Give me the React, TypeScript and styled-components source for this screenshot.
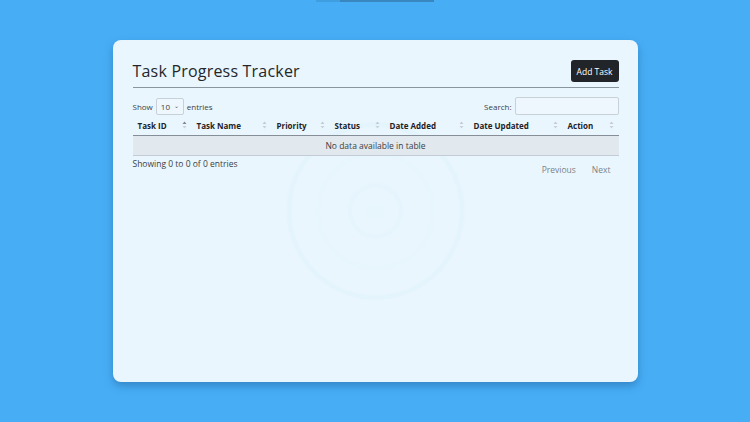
import styled, { createGlobalStyle } from "styled-components";

const GlobalStyle = createGlobalStyle`
  html, body {
    margin: 0;
    padding: 0;
    background: #47aef6;
    font-family: "Open Sans", "Liberation Sans", sans-serif;
  }
  * { box-sizing: border-box; }
`;

const Page = styled.div`
  width: 750px;
  height: 422px;
  display: flex;
  flex-direction: column;
  align-items: center;
  overflow: hidden;
`;

const TopStrip = styled.div`
  width: 118px;
  height: 2px;
  background: linear-gradient(90deg, #3f9edf 0 20%, #3a87c0 20% 100%);
  margin-bottom: 38px;
`;

const Card = styled.div`
  width: 525px;
  height: 342px;
  border-radius: 8px;
  padding: 20px 19px 0 20px;
  background:
    radial-gradient(circle at 50% 50%, rgba(215, 242, 252, 0.12) 0 8px, transparent 10px 22px, rgba(205, 238, 252, 0.14) 24px 27px, transparent 29px 54px, rgba(215, 240, 252, 0.14) 56px 59px, transparent 61px 83px, rgba(205, 236, 250, 0.2) 85px 88px, transparent 90px),
    #eaf6fd;
  box-shadow: 0 4px 8px rgba(20, 60, 110, 0.35);
  color: #212529;
`;

const Header = styled.div`
  display: flex;
  align-items: center;
  justify-content: space-between;
  padding-bottom: 5px;
  border-bottom: 1px solid #8a969f;
`;

const Title = styled.h1`
  margin: 0;
  font-size: 16px;
  line-height: 22px;
  font-weight: 500;
  color: #23272b;
  letter-spacing: 0.2px;
`;

const AddButton = styled.button`
  background: #212529;
  color: #fff;
  border: none;
  border-radius: 3px;
  height: 22px;
  padding: 0 6px;
  font-family: inherit;
  font-size: 8.5px;
`;

const Controls = styled.div`
  display: flex;
  justify-content: space-between;
  align-items: center;
  height: 18px;
  margin-top: 9px;
  font-size: 8px;
  color: #3a3f44;
`;

const Label = styled.label`
  display: flex;
  align-items: center;
  gap: 3px;
`;

const Select = styled.div`
  width: 28px;
  height: 17px;
  border: 1px solid #c9d1d8;
  border-radius: 2px;
  display: flex;
  align-items: center;
  justify-content: space-between;
  padding: 0 4px;
  font-size: 8px;
  background: #eef7fd;
`;

const SearchInput = styled.div`
  width: 104px;
  height: 18px;
  border: 1px solid #c9d1d8;
  border-radius: 2px;
  background: #eef7fd;
`;

const Table = styled.div`
  font-size: 8.5px;
`;

const HeadRow = styled.div`
  display: grid;
  grid-template-columns: 59px 80px 58px 55px 84px 94px 56px;
  border-bottom: 1px solid #868f97;
  height: 21px;
  align-items: center;
`;

const HeadCell = styled.div`
  display: flex;
  justify-content: space-between;
  align-items: center;
  padding: 0 5px;
  font-weight: 700;
  font-size: 8px;
  color: #1f2327;
`;

const SortIcon = ({ asc }: { asc?: boolean }) => (
  <svg width="5" height="8" viewBox="0 0 5 8">
    <path d="M2.5 0.5 L4.5 3 H0.5 Z" fill={asc ? "#7d858c" : "#c3cbd2"} />
    <path d="M2.5 7.5 L4.5 5 H0.5 Z" fill="#c9d1d8" />
  </svg>
);

const EmptyRow = styled.div`
  height: 20px;
  background: #e1e8ee;
  border-bottom: 1px solid #c3ccd4;
  display: flex;
  align-items: center;
  justify-content: center;
  color: #3a3f44;
`;

const Footer = styled.div`
  display: flex;
  justify-content: space-between;
  align-items: flex-start;
  margin-top: 2px;
  font-size: 8.5px;
  line-height: 12px;
  color: #3a3f44;
`;

const Pager = styled.div`
  display: flex;
  gap: 16px;
  padding: 6px 8px 0 0;
  color: #7b8389;
`;

const Chevron = styled.span`
  font-size: 6px;
  color: #555;
`;

const columns = ["Task ID", "Task Name", "Priority", "Status", "Date Added", "Date Updated", "Action"];

export default function App() {
  return (
    <Page>
      <GlobalStyle />
      <TopStrip />
      <Card>
        <Header>
          <Title>Task Progress Tracker</Title>
          <AddButton>Add Task</AddButton>
        </Header>
        <Controls>
          <Label>
            Show
            <Select>
              <span>10</span>
              <Chevron>⌄</Chevron>
            </Select>
            entries
          </Label>
          <Label>
            Search:
            <SearchInput />
          </Label>
        </Controls>
        <Table>
          <HeadRow>
            {columns.map((c, i) => (
              <HeadCell key={c}>
                {c}
                <SortIcon asc={i === 0} />
              </HeadCell>
            ))}
          </HeadRow>
          <EmptyRow>No data available in table</EmptyRow>
        </Table>
        <Footer>
          <span>Showing 0 to 0 of 0 entries</span>
          <Pager>
            <span>Previous</span>
            <span>Next</span>
          </Pager>
        </Footer>
      </Card>
    </Page>
  );
}
